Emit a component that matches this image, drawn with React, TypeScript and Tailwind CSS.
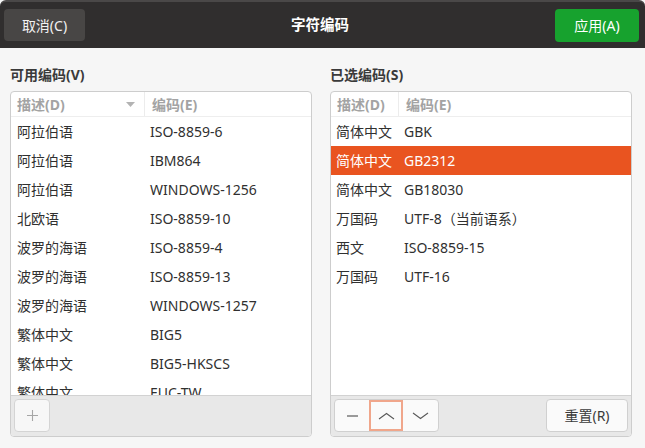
const available = [
  ["阿拉伯语", "ISO-8859-6"],
  ["阿拉伯语", "IBM864"],
  ["阿拉伯语", "WINDOWS-1256"],
  ["北欧语", "ISO-8859-10"],
  ["波罗的海语", "ISO-8859-4"],
  ["波罗的海语", "ISO-8859-13"],
  ["波罗的海语", "WINDOWS-1257"],
  ["繁体中文", "BIG5"],
  ["繁体中文", "BIG5-HKSCS"],
  ["繁体中文", "EUC-TW"],
];

const selected = [
  ["简体中文", "GBK"],
  ["简体中文", "GB2312"],
  ["简体中文", "GB18030"],
  ["万国码", "UTF-8（当前语系）"],
  ["西文", "ISO-8859-15"],
  ["万国码", "UTF-16"],
];

function ListHeader({ descWidth, arrow }: { descWidth: string; arrow?: boolean }) {
  return (
    <div className="flex h-[25px] shrink-0 border-b border-[#eeeeee] text-[14px] font-bold text-[#a3a3a3]">
      <div className={`flex items-center justify-between border-r border-[#ececec] pl-[6px] pr-[9px] ${descWidth}`}>
        <span>描述(D)</span>
        {arrow && (
          <svg width="9" height="5" viewBox="0 0 9 5" className="mt-[1px]">
            <path d="M0 0h9L4.5 5z" fill="#b3b3b3" />
          </svg>
        )}
      </div>
      <div className="flex items-center pl-[7px]">编码(E)</div>
    </div>
  );
}

function Chevron({ up }: { up?: boolean }) {
  return (
    <svg width="17" height="8" viewBox="0 0 17 8" fill="none" stroke="#5a5a5a" strokeWidth="1.1">
      <path d={up ? "M1 7L8.5 1.5L16 7" : "M1 1L8.5 6.5L16 1"} />
    </svg>
  );
}

export default function App() {
  return (
    <div
      className="flex h-[448px] w-[645px] flex-col overflow-hidden bg-[#f6f6f6] text-[#303030]"
      style={{ fontFamily: '"Noto Sans", "Noto Sans CJK SC", sans-serif' }}
    >
      <header className="flex h-12 shrink-0 items-center justify-between rounded-t-[6px] border-t-2 border-[#4a4848] bg-[#302e2e] pl-1 pr-[6px]">
        <button className="h-8 w-[81px] rounded-[4px] bg-[#484645] text-[14px] text-[#f2f2f2]">取消(C)</button>
        <h1 className="text-[14.5px] font-bold text-white">字符编码</h1>
        <button className="h-[33px] w-[84px] rounded-[4px] bg-[#17a22e] text-[14px] text-white">应用(A)</button>
      </header>

      <main className="flex h-[400px] min-h-0 shrink-0 gap-[18px] pb-[11px] pl-[10px] pr-[13px] pt-[17px]">
        <section className="flex min-h-0 w-[302px] flex-col">
          <h2 className="mb-[6px] h-5 shrink-0 text-[14px] font-bold leading-5 text-[#3a3a3a]">可用编码(V)</h2>
          <div className="flex min-h-0 flex-1 flex-col overflow-hidden rounded-[4px] border border-[#cdcdcd] bg-white">
            <ListHeader descWidth="w-[134px]" arrow />
            <div className="min-h-0 flex-1 overflow-hidden text-[14px]">
              {available.map(([desc, code], i) => (
                <div key={i} className="flex h-[29px] items-center">
                  <span className="w-[134px] pl-[6px]">{desc}</span>
                  <span className="pl-[5px]">{code}</span>
                </div>
              ))}
            </div>
            <div className="flex h-[41px] shrink-0 border-t border-[#d2d2d2] bg-[#e8e8e8] px-[3px] pt-[3px]">
              <button className="flex h-[33px] w-[36px] items-center justify-center rounded-[4px] border border-[#d4d4d4] bg-[#f7f7f7]">
                <svg width="13" height="13" viewBox="0 0 13 13" stroke="#a6a6a6" strokeWidth="1.1">
                  <path d="M6.5 1v11M1 6.5h11" />
                </svg>
              </button>
            </div>
          </div>
        </section>

        <section className="flex min-h-0 w-[302px] flex-col">
          <h2 className="mb-[6px] h-5 shrink-0 text-[14px] font-bold leading-5 text-[#3a3a3a]">已选编码(S)</h2>
          <div className="flex min-h-0 flex-1 flex-col overflow-hidden rounded-[4px] border border-[#cdcdcd] bg-white">
            <ListHeader descWidth="w-[68px]" />
            <div className="min-h-0 flex-1 overflow-hidden text-[14px]">
              {selected.map(([desc, code], i) => (
                <div
                  key={i}
                  className={`flex h-[29px] items-center ${i === 1 ? "bg-[#e95420] text-white" : ""}`}
                >
                  <span className="w-[68px] whitespace-nowrap pl-[5px]">{desc}</span>
                  <span className="pl-[5px]">{code}</span>
                </div>
              ))}
            </div>
            <div className="flex h-[41px] shrink-0 justify-between border-t border-[#d2d2d2] bg-[#e8e8e8] px-[3px] pt-[3px]">
              <div className="flex h-[33px] overflow-hidden rounded-[4px] border border-[#d0d0d0] bg-[#fafafa]">
                <button className="flex w-[34px] items-center justify-center">
                  <svg width="11" height="2" viewBox="0 0 11 2" stroke="#3a3a3a" strokeWidth="1.2">
                    <path d="M0 1h11" />
                  </svg>
                </button>
                <button className="flex w-[34px] items-center justify-center border-2 border-[#f0a68b]">
                  <Chevron up />
                </button>
                <button className="flex w-[35px] items-center justify-center">
                  <Chevron />
                </button>
              </div>
              <button className="h-[33px] w-[82px] rounded-[4px] border border-[#d0d0d0] bg-[#fafafa] text-[14px] text-[#3a3a3a]">
                重置(R)
              </button>
            </div>
          </div>
        </section>
      </main>
    </div>
  );
}
